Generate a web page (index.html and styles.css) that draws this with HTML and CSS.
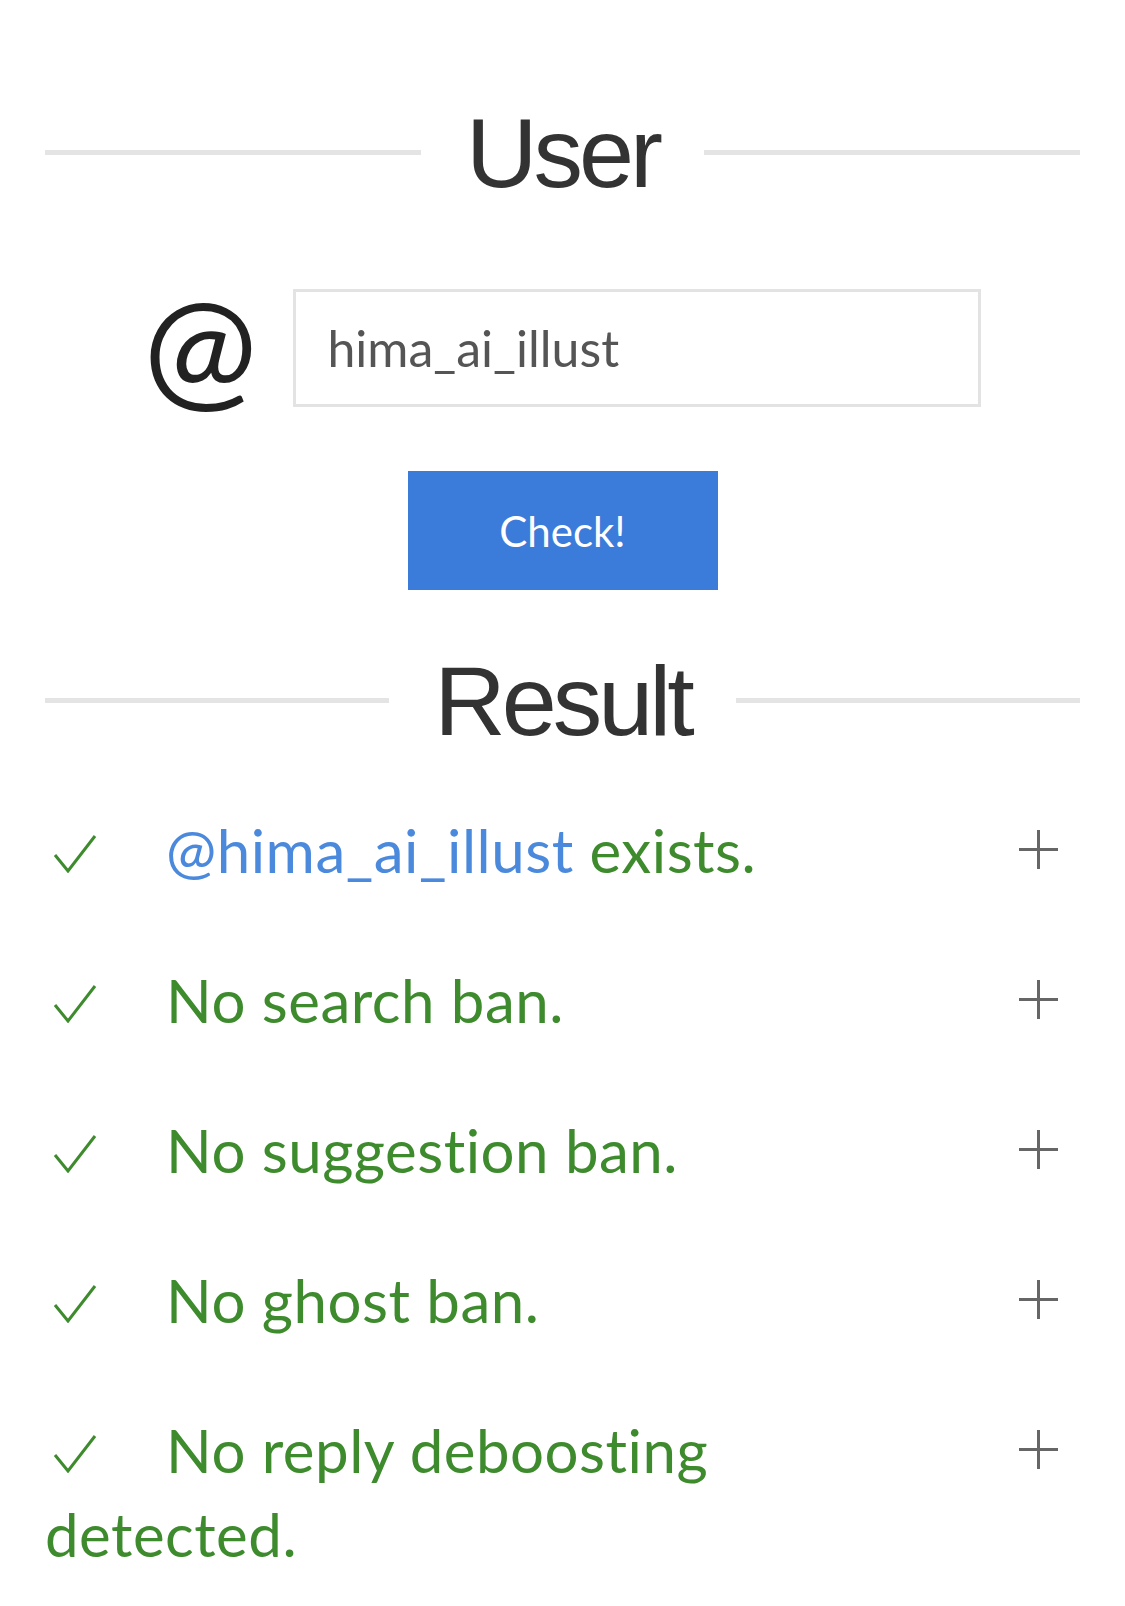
FILE: index.html
```html
<!DOCTYPE html>
<html lang="en">
<head>
<meta charset="utf-8">
<title>Shadowban check</title>
<link rel="stylesheet" href="styles.css">
</head>
<body>
<div class="page">
  <div class="section-title title-user">
    <span class="rule"></span>
    <h2 class="title-text">User</h2>
    <span class="rule"></span>
  </div>

  <div class="user-row">
    <span class="at">@</span>
    <input class="user-input" type="text" value="hima_ai_illust">
  </div>

  <button class="check-btn" type="button">Check!</button>

  <div class="section-title title-result">
    <span class="rule"></span>
    <h2 class="title-text">Result</h2>
    <span class="rule"></span>
  </div>

  <ul class="results">
    <li class="result">
      <div class="result-text"><svg class="tick" viewBox="0 0 121 40" width="121" height="40"><polyline points="10,22 23,38 50,3" /></svg><span class="handle">@hima_ai_illust</span> exists.</div>
      <svg class="plus" viewBox="0 0 39 39" width="39" height="39"><path d="M19.5 0V39M0 19.5H39"/></svg>
    </li>
    <li class="result">
      <div class="result-text"><svg class="tick" viewBox="0 0 121 40" width="121" height="40"><polyline points="10,22 23,38 50,3" /></svg>No search ban.</div>
      <svg class="plus" viewBox="0 0 39 39" width="39" height="39"><path d="M19.5 0V39M0 19.5H39"/></svg>
    </li>
    <li class="result">
      <div class="result-text"><svg class="tick" viewBox="0 0 121 40" width="121" height="40"><polyline points="10,22 23,38 50,3" /></svg>No suggestion ban.</div>
      <svg class="plus" viewBox="0 0 39 39" width="39" height="39"><path d="M19.5 0V39M0 19.5H39"/></svg>
    </li>
    <li class="result">
      <div class="result-text"><svg class="tick" viewBox="0 0 121 40" width="121" height="40"><polyline points="10,22 23,38 50,3" /></svg>No ghost ban.</div>
      <svg class="plus" viewBox="0 0 39 39" width="39" height="39"><path d="M19.5 0V39M0 19.5H39"/></svg>
    </li>
    <li class="result">
      <div class="result-text"><svg class="tick" viewBox="0 0 121 40" width="121" height="40"><polyline points="10,22 23,38 50,3" /></svg>No reply deboosting detected.</div>
      <svg class="plus" viewBox="0 0 39 39" width="39" height="39"><path d="M19.5 0V39M0 19.5H39"/></svg>
    </li>
  </ul>
</div>
</body>
</html>
```

FILE: styles.css
```css
* {
  box-sizing: border-box;
}

html, body {
  margin: 0;
  padding: 0;
  background: #ffffff;
}

body {
  font-family: Lato, "Noto Sans", "Open Sans", sans-serif;
  color: #333333;
}

.page {
  padding: 0 45px;
}

.section-title {
  display: flex;
  align-items: center;
  gap: 45px;
}

.title-user {
  padding-top: 103px;
}

.title-result {
  margin-top: 61px;
}

.rule {
  flex: 1;
  height: 5px;
  background: #e4e4e4;
}

.title-text {
  margin: 0;
  font-family: "Liberation Sans", Arial, sans-serif;
  font-weight: normal;
  font-size: 99px;
  line-height: 99px;
  letter-spacing: -4px;
  color: #333333;
}

.user-row {
  margin-top: 87px;
  display: flex;
  justify-content: center;
  align-items: flex-start;
  gap: 36px;
}

.at {
  font-family: Lato, sans-serif;
  font-size: 136px;
  line-height: 118px;
  color: #222222;
  margin-top: -4px;
}

.user-input {
  width: 688px;
  height: 118px;
  border: 3px solid #e3e3e3;
  border-radius: 0;
  padding: 0 31px;
  font-family: Lato, sans-serif;
  font-size: 50px;
  color: #555555;
  background: #ffffff;
  outline: none;
}

.check-btn {
  display: block;
  margin: 64px auto 0;
  width: 310px;
  height: 119px;
  border: none;
  border-radius: 0;
  background: #3b7bda;
  color: #ffffff;
  font-family: Lato, sans-serif;
  font-size: 42px;
  padding: 0;
}

.results {
  list-style: none;
  margin: 25px 0 0;
  padding: 0;
}

.result {
  display: flex;
  align-items: flex-start;
  padding: 33px 0;
}

.result-text {
  flex: 1;
  padding-right: 120px;
  font-size: 60px;
  line-height: 84px;
  letter-spacing: 0.5px;
  color: #3e8b2e;
}

.handle {
  color: #4a89dc;
}

.tick {
  display: inline-block;
  vertical-align: baseline;
}

.tick polyline {
  fill: none;
  stroke: #3e8b2e;
  stroke-width: 3;
}

.plus {
  flex: none;
  margin-top: 22px;
  margin-right: 22px;
}

.plus path {
  stroke: #666666;
  stroke-width: 3;
}
```
